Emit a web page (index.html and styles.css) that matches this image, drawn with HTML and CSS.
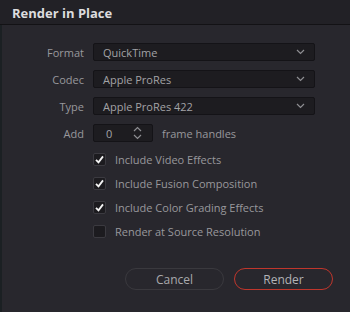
FILE: index.html
```html
<!DOCTYPE html>
<html lang="en">

<head>
    <meta charset="UTF-8">
    <meta name="viewport" content="width=device-width, initial-scale=1.0">
    <title>Render in Place</title>
    <link rel="stylesheet" href="styles.css">
</head>

<body>
    <div class="dialog">
        <header class="title-bar">Render in Place</header>

        <main class="dialog-body">
            <div class="fields">
                <label class="field-label">Format</label>
                <div class="select">
                    <span>QuickTime</span>
                    <svg class="chevron" width="9" height="6" viewBox="0 0 9 6"><path d="M1 1 L4.5 4.5 L8 1" /></svg>
                </div>

                <label class="field-label">Codec</label>
                <div class="select">
                    <span>Apple ProRes</span>
                    <svg class="chevron" width="9" height="6" viewBox="0 0 9 6"><path d="M1 1 L4.5 4.5 L8 1" /></svg>
                </div>

                <label class="field-label">Type</label>
                <div class="select">
                    <span>Apple ProRes 422</span>
                    <svg class="chevron" width="9" height="6" viewBox="0 0 9 6"><path d="M1 1 L4.5 4.5 L8 1" /></svg>
                </div>

                <label class="field-label">Add</label>
                <div class="add-row">
                    <div class="spin-box">
                        <span>0</span>
                        <svg class="spinner" width="9" height="14" viewBox="0 0 9 14">
                            <path d="M1 5 L4.5 1.5 L8 5" />
                            <path d="M1 9 L4.5 12.5 L8 9" />
                        </svg>
                    </div>
                    <span class="add-suffix">frame handles</span>
                </div>
            </div>

            <ul class="checks">
                <li class="check-row">
                    <span class="checkbox checked">
                        <svg width="11" height="11" viewBox="0 0 11 11"><path d="M2 5.8 L4.5 8.4 L9 2.4" /></svg>
                    </span>
                    Include Video Effects
                </li>
                <li class="check-row">
                    <span class="checkbox checked">
                        <svg width="11" height="11" viewBox="0 0 11 11"><path d="M2 5.8 L4.5 8.4 L9 2.4" /></svg>
                    </span>
                    Include Fusion Composition
                </li>
                <li class="check-row">
                    <span class="checkbox checked">
                        <svg width="11" height="11" viewBox="0 0 11 11"><path d="M2 5.8 L4.5 8.4 L9 2.4" /></svg>
                    </span>
                    Include Color Grading Effects
                </li>
                <li class="check-row">
                    <span class="checkbox"></span>
                    Render at Source Resolution
                </li>
            </ul>

            <div class="actions">
                <button class="btn">Cancel</button>
                <button class="btn btn-primary">Render</button>
            </div>
        </main>
    </div>
</body>

</html>
```

FILE: styles.css
```css
html,
body {
    margin: 0;
    padding: 0;
    height: 100%;
}

body {
    background-color: #28272d;
    font-family: "Open Sans", "Noto Sans", sans-serif;
    color: #a3a3a6;
    overflow: hidden;
}

.dialog {
    height: 100%;
    display: flex;
    flex-direction: column;
}

.title-bar {
    height: 25px;
    box-sizing: border-box;
    padding: 4px 12px 0;
    background-color: #222126;
    border-bottom: 1px solid #131215;
    color: #dcdcde;
    font-size: 13px;
    font-weight: bold;
    line-height: 19px;
}

.dialog-body {
    flex: 1;
    border-left: 2px solid #1b2023;
    padding-top: 18px;
}

.fields {
    display: grid;
    grid-template-columns: 82px 222px;
    column-gap: 9px;
    row-gap: 9px;
    align-items: center;
}

.field-label {
    text-align: right;
    font-size: 11px;
    color: #98989c;
}

.select,
.spin-box {
    height: 18px;
    box-sizing: border-box;
    background-color: #1d1c20;
    border: 1px solid #141317;
    border-radius: 2px;
    display: flex;
    align-items: center;
    justify-content: space-between;
    padding: 0 9px 0 9px;
    font-size: 11px;
    color: #a3a3a6;
}

.chevron path,
.spinner path {
    fill: none;
    stroke: #8e8e92;
    stroke-width: 1.2;
}

.add-row {
    display: flex;
    align-items: center;
    gap: 9px;
}

.spin-box {
    width: 60px;
    padding: 0 10px 0 12px;
}

.add-suffix {
    font-size: 11px;
    color: #98989c;
}

.checks {
    list-style: none;
    margin: 11px 0 0;
    padding: 0 0 0 91px;
    display: flex;
    flex-direction: column;
    gap: 11px;
}

.check-row {
    display: flex;
    align-items: center;
    gap: 9px;
    height: 13px;
    font-size: 11px;
    color: #98989c;
}

.checkbox {
    width: 13px;
    height: 13px;
    box-sizing: border-box;
    border: 1px solid #3b3a40;
    border-radius: 2px;
    background-color: #1c1b1f;
    display: flex;
    align-items: center;
    justify-content: center;
}

.checkbox path {
    fill: none;
    stroke: #f4f4f4;
    stroke-width: 1.8;
}

.actions {
    display: flex;
    gap: 10px;
    margin: 30px 0 0 123px;
}

.btn {
    height: 22px;
    width: 99px;
    border-radius: 11px;
    border: 1px solid #3a393e;
    background-color: transparent;
    color: #a9a9ac;
    font-family: inherit;
    font-size: 12px;
    padding: 0;
    cursor: pointer;
}

.btn-primary {
    border-color: #c0362c;
    color: #b3b3b6;
}
```
